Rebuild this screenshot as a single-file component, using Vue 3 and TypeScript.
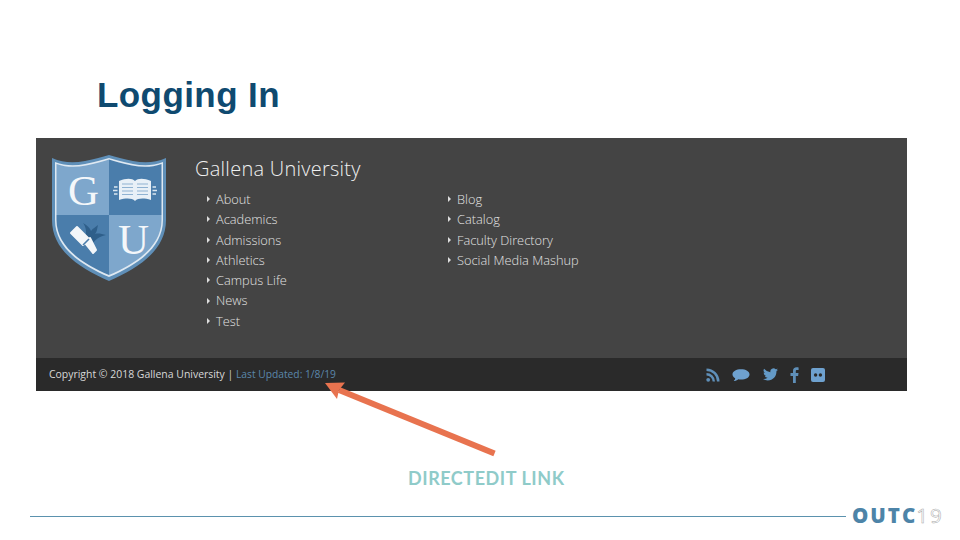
<script setup lang="ts">
const leftLinks: string[] = ['About', 'Academics', 'Admissions', 'Athletics', 'Campus Life', 'News', 'Test']
const rightLinks: string[] = ['Blog', 'Catalog', 'Faculty Directory', 'Social Media Mashup']
</script>

<template>
  <div class="slide">
    <h1 class="title">Logging In</h1>
    <section class="site-footer">
      <div class="main">
        <svg class="shield" width="114" height="126" viewBox="0 0 114 126">
          <path d="M0 3 C11 8 22 8 33 6 C43 4 50 2 57 0 C64 2 71 4 81 6 C92 8 103 8 114 3 L114 65 C114 95 87 113 57 126 C27 113 0 95 0 65 Z" fill="#5f8fb8"/>
          <path d="M3 7 C13 11 23 11 33 9 C43 7 50 5 57 3 C64 5 71 7 81 9 C91 11 101 11 111 7 L111 65 C111 93 85 110 57 122 C29 110 3 93 3 65 Z" fill="#dfe9f2"/>
          <path d="M4.5 9 C14 12.5 24 12.5 34 10.5 C44 8.500 51 6.500 57 4.500 L57 60 L4.500 60 Z" fill="#7ea7cc"/>
          <path d="M57 4.500 C63 6.500 70 8.500 80 10.500 C90 12.500 100 12.500 109.500 9 L109.500 60 L57 60 Z" fill="#4a7dab"/>
          <path d="M4.500 60 L57 60 L57 120 C31 109 4.500 92 4.500 65 Z" fill="#4a7dab"/>
          <path d="M57 60 L109.500 60 L109.500 65 C109.500 92 83 109 57 120 Z" fill="#7ea7cc"/>
          <text x="31.500" y="50" class="crest" font-size="43">G</text>
          <text x="81.500" y="99" class="crest" font-size="43">U</text>
          <path d="M67 26 C74 23 80 23 83 26 C86 23 92 23 99 26 L99 45 C92 43 86 43 83 46 C80 43 74 43 67 45 Z" fill="#e8f0f7"/>
          <path d="M70 29 H81 M70 32.500 H81 M70 36 H81 M70 39.500 H81 M85 29 H96 M85 32.500 H96 M85 36 H96 M85 39.500 H96" stroke="#8fb2d2" stroke-width="1.2"/>
          <path d="M62 32 H65.500 M61 35.500 H65.500 M62 39 H65.500 M100.500 32 H104 M100.500 35.500 H105 M100.500 39 H104" stroke="#dbe7f1" stroke-width="1.5"/>
          <path d="M33 84 C35 77 34 72 31 68 C35 70 38 73 39 76 C41 73 44 72 46 70 C45 74 45 77 43 79 C46 78 50 79 54 80 C49 81 45 83 41 88 C38 90 35 88 33 84 Z" fill="#2f5f8a"/>
          <path d="M19 78 L25 72 L37 84 L31 90 Z" fill="#f3f6f9" stroke="#f3f6f9" stroke-width="2" stroke-linejoin="round"/>
          <path d="M33 88 L38 83 L44 95 L41 98 Z" fill="#f3f6f9" stroke="#f3f6f9" stroke-width="2" stroke-linejoin="round"/>
          <path d="M31 90 L37 84" stroke="#4a7dab" stroke-width="1.6"/>
        </svg>
        <div class="content">
          <h2 class="name">Gallena University</h2>
          <div class="menus">
            <ul class="menu">
              <li v-for="link in leftLinks" :key="link"><span class="caret"></span>{{ link }}</li>
            </ul>
            <ul class="menu">
              <li v-for="link in rightLinks" :key="link"><span class="caret"></span>{{ link }}</li>
            </ul>
          </div>
        </div>
      </div>
      <div class="bar">
        <p class="copy">Copyright © 2018 Gallena University <span class="sep">|</span> <a class="updated">Last Updated: 1/8/19</a></p>
        <div class="social">
          <svg width="14" height="14" viewBox="0 0 14 14" fill="#5f8fb8">
            <circle cx="2.2" cy="11.8" r="1.9"/>
            <path d="M0.5 5 A8.5 8.5 0 0 1 9 13.5 H6.6 A6.1 6.1 0 0 0 0.5 7.4 Z"/>
            <path d="M0.5 0.5 A13 13 0 0 1 13.5 13.5 H11 A10.500 10.500 0 0 0 0.5 3 Z"/>
          </svg>
          <svg width="18" height="14" viewBox="0 0 19 14" fill="#6ea1cf">
            <path d="M9.500 1 C14.500 1 18.500 3.200 18.500 6.400 C18.500 9.600 14.500 11.800 9.500 11.800 C8.400 11.800 7.500 11.700 6.600 11.500 C5.400 12.600 3.600 13.400 1.800 13.400 C2.800 12.400 3.300 11.300 3.400 10.300 C1.600 9.400 0.5 8 0.5 6.400 C0.5 3.200 4.500 1 9.500 1 Z"/>
          </svg>
          <svg width="15" height="13" viewBox="0 0 24 20" fill="#6399c6">
            <path d="M24 2.400 a10 10 0 0 1-2.800.8 5 5 0 0 0 2.200-2.700 10 10 0 0 1-3.100 1.200 4.900 4.900 0 0 0-8.400 4.500 A14 14 0 0 1 1.700.9a4.900 4.900 0 0 0 1.500 6.600 4.900 4.900 0 0 1-2.200-.6 4.900 4.900 0 0 0 3.900 4.900 5 5 0 0 1-2.200.1 4.900 4.900 0 0 0 4.600 3.400A9.900 9.900 0 0 1 0 17.300 14 14 0 0 0 7.500 19.500c9.100 0 14.300-7.700 14-14.600A10 10 0 0 0 24 2.400Z"/>
          </svg>
          <svg width="9" height="16" viewBox="0 0 9 16" fill="#5f8fb8">
            <path d="M3 16 V9 H0.5 V6 H3 V4 C3 1.500 4.400 0.3 6.600 0.3 C7.600 0.3 8.300 0.4 8.600 0.4 V3 H7.100 C6 3 5.800 3.500 5.800 4.300 V6 H8.500 L8.100 9 H5.800 V16 Z"/>
          </svg>
          <svg width="14" height="14" viewBox="0 0 14 14">
            <rect width="14" height="14" rx="2" fill="#6ea1cf"/>
            <circle cx="4.600" cy="7" r="1.700" fill="#2a2a2a"/>
            <circle cx="9.400" cy="7" r="1.700" fill="#2a2a2a"/>
          </svg>
        </div>
      </div>
    </section>
    <div class="caption">DIRECTEDIT LINK</div>
    <footer class="foot">
      <div class="rule"></div>
      <div class="brand">OUTC<span class="ghost">19</span></div>
    </footer>
    <svg class="arrow" width="180" height="80" viewBox="0 0 180 80">
      <path d="M169.500 71.500 L14 8" stroke="#e8734f" stroke-width="6" fill="none"/>
      <path d="M0 1 L20 0.500 L14 8 L12 17 Z" fill="#e8734f"/>
    </svg>
  </div>
</template>

<style>
html, body { margin: 0; background: #fff; }
</style>

<style scoped>
.slide {
  position: relative;
  width: 960px;
  height: 540px;
  overflow: hidden;
  background: #fff;
  display: flex;
  flex-direction: column;
}
.title {
  margin: 0;
  height: 138px;
  box-sizing: border-box;
  padding: 74px 0 0 97px;
  font: bold 35px/42px "Liberation Sans", Arial, sans-serif;
  letter-spacing: 0.42px;
  color: #0f4a70;
}
.site-footer {
  margin-left: 36px;
  width: 871px;
  height: 253px;
  display: flex;
  flex-direction: column;
  font-family: "Open Sans", sans-serif;
}
.main {
  flex: 1;
  background: #444;
  display: flex;
  padding: 17px 0 0 16px;
  box-sizing: border-box;
}
.shield { flex: none; }
.content { margin-left: 29px; }
.name {
  margin: 0;
  font-weight: 300;
  font-size: 20px;
  line-height: 28px;
  letter-spacing: 0.26px;
  color: #f0f0f0;
}
.menus {
  display: flex;
  margin-top: 6px;
  margin-left: 12px;
}
.menu {
  list-style: none;
  margin: 0;
  padding: 0;
  width: 241px;
  font-size: 12.8px;
  font-weight: 300;
  line-height: 20.3px;
  color: #e2e2e2;
}
.menu li { display: flex; align-items: center; }
.caret {
  width: 0;
  height: 0;
  border-left: 3px solid #ddd;
  border-top: 3px solid transparent;
  border-bottom: 3px solid transparent;
  margin-right: 6px;
}
.bar {
  height: 33px;
  flex: none;
  background: #2a2a2a;
  display: flex;
  align-items: center;
  justify-content: space-between;
  padding: 0 82px 0 13px;
}
.copy {
  margin: 0 0 2px;
  font-size: 10.45px;
  color: #d8d8d8;
  white-space: pre-wrap;
}
.sep { color: #ccc; }
.updated { color: #5b87ab; font-size: 10.25px; }
.social {
  display: flex;
  align-items: center;
  gap: 12.25px;
}
.crest {
  font-family: "Liberation Serif", serif;
  fill: #f4f7fa;
  text-anchor: middle;
}
.caption {
  margin-top: 76px;
  margin-left: 408px;
  font: bold 18px/22px Lato, sans-serif;
  letter-spacing: 0.55px;
  color: #8fcbc9;
}
.foot {
  display: flex;
  align-items: center;
  margin: 13px 0 0 30px;
}
.rule {
  width: 816px;
  height: 1px;
  background: #5b92ae;
}
.brand {
  margin: 0 0 3px 6px;
  font: 800 20.5px/26px "Open Sans", sans-serif;
  letter-spacing: 2px;
  color: #4d84a8;
}
.ghost {
  margin-left: -1px;
  color: #fff;
  font-weight: 400;
  -webkit-text-stroke: 0.5px #a8a8a8;
  letter-spacing: 2px;
}
.arrow {
  position: absolute;
  left: 325px;
  top: 382px;
}
</style>
